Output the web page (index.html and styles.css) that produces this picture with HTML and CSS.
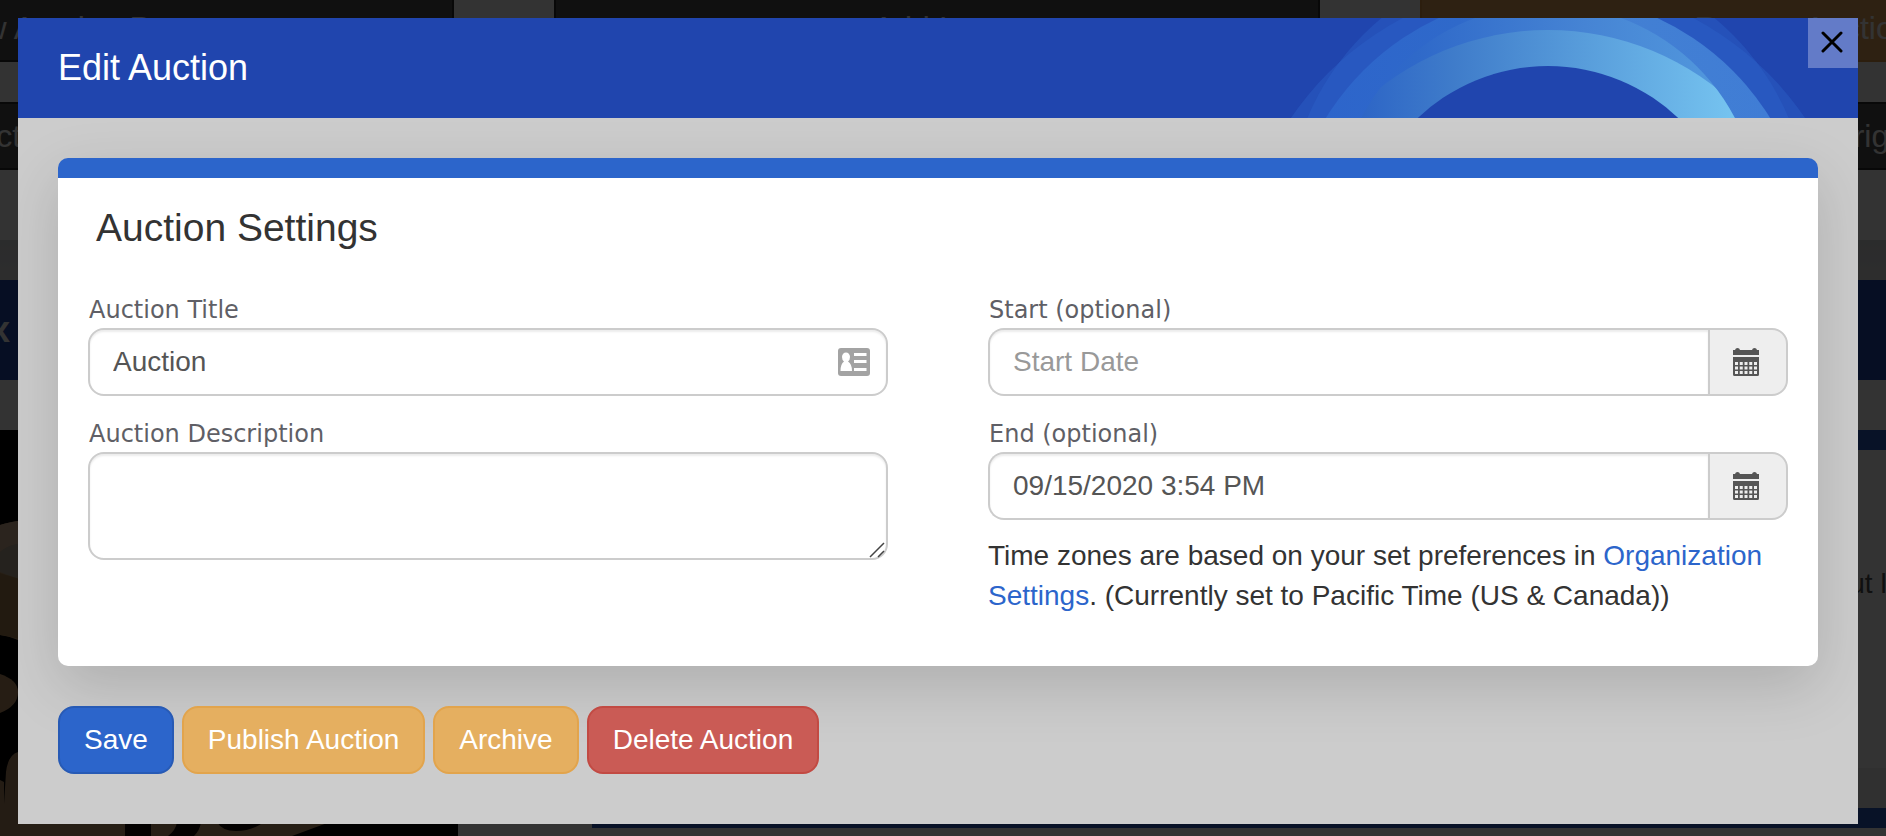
FILE: index.html
```
<!DOCTYPE html>
<html lang="en">
<head>
    <meta charset="UTF-8">
    <meta name="viewport" content="width=device-width, initial-scale=1.0">
    <title>Edit Auction</title>
    <link rel="stylesheet" href="styles.css">
</head>
<body>
    <!-- Page behind the modal -->
    <div class="page" aria-hidden="true">
        <div class="toolbar">
            <button class="tool" tabindex="-1">View Auction Page</button>
            <button class="tool" tabindex="-1">Add Item</button>
            <button class="tool tool-warning" tabindex="-1">Restart Auction</button>
            <button class="tool" tabindex="-1">Auction Reports</button>
            <button class="tool" tabindex="-1">Bidders</button>
            <button class="tool" tabindex="-1">Show Copyright</button>
        </div>
        <div class="page-shade"></div>
        <div class="banner"><h2>Box</h2></div>
        <div class="listing">
            <svg class="photo" viewBox="0 0 458 406" preserveAspectRatio="xMinYMin slice">
                <rect width="458" height="406" fill="#000"/>
                <path d="M0 95 Q9 92 30 89 V240 L18 210 Q9 206 0 205Z" fill="#c39b6e"/>
                <path d="M0 95 Q9 92 30 89 V112 Q9 114 0 122Z" fill="#d7b496"/>
                <path d="M0 122 Q8 114 30 112 V152 Q9 146 0 142Z" fill="#b9aa96"/>
                <path d="M0 143 Q9 146 30 152 V212 Q9 206 0 205Z" fill="#aa8250"/>
                <path d="M0 244 Q18 250 18 262 Q18 276 0 283Z" fill="#be9164"/>
                <path d="M0 350 L4 352 V406 H0Z M2 406 L6 342 Q8 325 18 322 H80 V406Z" fill="#b48c64"/>
                <path d="M20 392 H330 L292 406 H20Z" fill="#c39b6e"/>
                <path d="M125 392 H151 V406 H125Z M177 392 H201 Q200 400 194 406 H168 Q176 400 177 392Z M217 392 Q222 401 236 401 Q252 401 264 392Z" fill="#140a05"/>
            </svg>
            <div class="items">
                <div class="item-card"><p>About lots</p></div>
                <div class="item-card"></div>
            </div>
        </div>
    </div>

    <div class="overlay">
        <div class="modal" role="dialog" aria-modal="true" aria-labelledby="modal-title">
            <div class="modal-header">
                <h1 id="modal-title">Edit Auction</h1>
                <svg class="arcs" viewBox="0 0 598 100" aria-hidden="true">
                    <defs>
                        <linearGradient id="band" x1="66" y1="0" x2="510" y2="0" gradientUnits="userSpaceOnUse">
                            <stop offset="0" stop-color="#2d65cb"/>
                            <stop offset="0.3" stop-color="#2f69ca"/>
                            <stop offset="0.6" stop-color="#4380d3"/>
                            <stop offset="1" stop-color="#407dd5"/>
                        </linearGradient>
                        <linearGradient id="inner" x1="100" y1="0" x2="475" y2="0" gradientUnits="userSpaceOnUse">
                            <stop offset="0" stop-color="#2d65cb"/>
                            <stop offset="0.15" stop-color="#2f69c9"/>
                            <stop offset="0.6" stop-color="#4684d4"/>
                            <stop offset="1" stop-color="#539ade"/>
                        </linearGradient>
                        <linearGradient id="glow" x1="100" y1="0" x2="475" y2="0" gradientUnits="userSpaceOnUse">
                            <stop offset="0" stop-color="#2d65c6"/>
                            <stop offset="0.25" stop-color="#3f7cca"/>
                            <stop offset="0.6" stop-color="#589ddb"/>
                            <stop offset="1" stop-color="#76c4f0"/>
                        </linearGradient>
                        <clipPath id="ring"><circle cx="288" cy="198" r="211"/></clipPath>
                    </defs>
                    <circle cx="288" cy="275" r="311" fill="#2c65cb" fill-opacity="0.4"/>
                    <circle cx="288" cy="201" r="261" fill="#2c65cb" fill-opacity="0.4"/>
                    <circle cx="288" cy="237" r="261" fill="url(#band)"/>
                    <circle cx="288" cy="198" r="211" fill="url(#inner)"/>
                    <circle cx="288" cy="285" r="273" fill="url(#glow)" clip-path="url(#ring)"/>
                    <circle cx="288" cy="237" r="189" fill="#2045ae"/>
                </svg>
                <button class="close" type="button" aria-label="Close">
                    <svg width="22" height="22" viewBox="0 0 22 22"><path d="M2 2 L20 20 M20 2 L2 20" stroke="#000" stroke-width="3" stroke-linecap="round"/></svg>
                </button>
            </div>

            <form class="modal-body">
                <div class="card">
                    <h2>Auction Settings</h2>
                    <div class="columns">
                        <div class="column">
                            <div class="field">
                                <label for="title">Auction Title</label>
                                <div class="control">
                                    <input type="text" id="title" value="Auction">
                                    <svg class="contact-icon" viewBox="0 0 32 28" aria-hidden="true">
                                        <rect width="32" height="28" rx="3" fill="#a3a3a3"/>
                                        <path d="M8 4.500 a4 4.500 0 0 1 4 4.500 q0 3-2 4.500 q4 2.500 4 9.500 H2.500 q0-7 3.500-9.500 q-2-1.500-2-4.500 a4 4.500 0 0 1 4-4.500z M16 5 h12.500 v3 h-12.500z M16 12 h12.500 v3 h-12.500z M16 20 h12.500 v3 h-12.500z" fill="#fff"/>
                                    </svg>
                                </div>
                            </div>
                            <div class="field">
                                <label for="description">Auction Description</label>
                                <div class="control">
                                    <textarea id="description"></textarea>
                                    <svg class="grip" viewBox="0 0 16 16" aria-hidden="true"><path d="M1 15 L15 1 M9 15 L15 9" stroke="#444" stroke-width="1.500"/></svg>
                                </div>
                            </div>
                        </div>
                        <div class="column">
                            <div class="field">
                                <label for="start">Start (optional)</label>
                                <div class="input-group">
                                    <input type="text" id="start" placeholder="Start Date">
                                    <button class="addon" type="button" aria-label="Pick start date">
                                        <svg width="26" height="28" viewBox="0 0 26 28">
                                            <path d="M0 2 H2 Q2.500 0 4.500 0 Q6.500 0 7 2 H19 Q19.500 0 21.500 0 Q23.500 0 24 2 H26 V7 H0Z M0 9 H26 V26.500 Q26 28 24.500 28 H1.500 Q0 28 0 26.500Z" fill="#555"/>
                                            <path d="M2 15.500 H24 M2 20 H24 M2 24.500 H24" stroke="#eee" stroke-width="3" stroke-dasharray="3 1.750"/>
                                        </svg>
                                    </button>
                                </div>
                            </div>
                            <div class="field">
                                <label for="end">End (optional)</label>
                                <div class="input-group">
                                    <input type="text" id="end" value="09/15/2020 3:54 PM">
                                    <button class="addon" type="button" aria-label="Pick end date">
                                        <svg width="26" height="28" viewBox="0 0 26 28">
                                            <path d="M0 2 H2 Q2.500 0 4.500 0 Q6.500 0 7 2 H19 Q19.500 0 21.500 0 Q23.500 0 24 2 H26 V7 H0Z M0 9 H26 V26.500 Q26 28 24.500 28 H1.500 Q0 28 0 26.500Z" fill="#555"/>
                                            <path d="M2 15.500 H24 M2 20 H24 M2 24.500 H24" stroke="#eee" stroke-width="3" stroke-dasharray="3 1.750"/>
                                        </svg>
                                    </button>
                                </div>
                                <p class="help">Time zones are based on your set preferences in <a href="#">Organization Settings</a>. (Currently set to Pacific Time (US &amp; Canada))</p>
                            </div>
                        </div>
                    </div>
                </div>

                <div class="actions">
                    <button class="btn btn-primary" type="submit">Save</button>
                    <button class="btn btn-warning" type="button">Publish Auction</button>
                    <button class="btn btn-warning" type="button">Archive</button>
                    <button class="btn btn-danger" type="button">Delete Auction</button>
                </div>
            </form>
        </div>
    </div>
</body>
</html>
```
FILE: styles.css
```
* {
    box-sizing: border-box;
}

body {
    margin: 0;
    font-family: "Liberation Sans", Arial, sans-serif;
    font-size: 28px;
    line-height: 40px;
    color: #333;
    height: 100vh;
    overflow: hidden;
}

h1, h2, p {
    margin: 0;
    font-weight: normal;
}

button, input, textarea {
    font-family: inherit;
    font-size: inherit;
    line-height: inherit;
}

/* Page behind the modal */
.page {
    height: 100vh;
    overflow: hidden;
    background-color: #fff;
    display: flex;
    flex-direction: column;
}

.toolbar {
    display: grid;
    grid-template-columns: repeat(3, 766px);
    justify-content: center;
    gap: 40px 100px;
    margin-top: -6px;
    padding-right: 12px;
}

.tool {
    height: 68px;
    border: 2px solid #282828;
    background-color: #505050;
    color: #fff;
    font-size: 32px;
}

.tool-warning {
    background-color: #e6a35a;
    border-color: #dc9646;
}

.page-shade {
    height: 40px;
    flex-shrink: 0;
    margin-top: 70px;
    background: linear-gradient(#d7d9dc, #e1e1e1);
}

.banner {
    height: 100px;
    flex-shrink: 0;
    display: flex;
    align-items: center;
    background-color: #2045ae;
    color: #fff;
}

.banner h2 {
    margin-left: -58px;
    font-size: 36px;
    font-weight: bold;
}

.listing {
    flex: 1;
    min-height: 0;
    display: flex;
    gap: 134px;
    padding-top: 50px;
}

.photo {
    width: 458px;
    flex-shrink: 0;
}

.items {
    flex: 1;
    display: flex;
    flex-direction: column;
    gap: 40px;
    background-color: #f0f0f0;
}

.item-card {
    height: 338px;
    flex-shrink: 0;
    padding-top: 114px;
    border-top: 20px solid #2a5bc0;
    background-color: #fff;
    color: #505050;
    overflow: hidden;
}

.item-card p {
    width: max-content;
    margin: 0 -38px 0 auto;
}

/* Modal */
.overlay {
    position: fixed;
    inset: 0;
    padding: 18px 28px 12px 18px;
    background-color: rgba(0, 0, 0, 0.8);
}

.modal {
    background-color: #ccc;
}

.modal-header {
    position: relative;
    z-index: 1;
    display: flex;
    align-items: center;
    height: 100px;
    padding-left: 40px;
    background-color: #2045ae;
    color: #fff;
    overflow: hidden;
}

.modal-header h1 {
    font-size: 36px;
}

.arcs {
    width: 598px;
    height: 100px;
    margin-left: auto;
}

.close {
    position: absolute;
    top: 0;
    right: 0;
    display: flex;
    align-items: center;
    justify-content: center;
    width: 50px;
    height: 50px;
    padding: 0 2px 2px 0;
    border: none;
    background-color: #637bc8;
    cursor: pointer;
}

.modal-body {
    padding: 40px 40px 50px;
}

.card {
    padding: 30px 30px 50px;
    border-top: 20px solid #2c65cb;
    border-radius: 10px;
    background-color: #fff;
    box-shadow: 0 20px 60px rgba(0, 0, 0, 0.15);
}

.card h2 {
    margin: 0 0 42px 8px;
    font-size: 39px;
}

.columns {
    display: grid;
    grid-template-columns: 1fr 1fr;
    gap: 100px;
}

.column {
    display: flex;
    flex-direction: column;
    gap: 18px;
}

label {
    display: block;
    padding: 2px 0 0 1px;
    font-family: "DejaVu Sans", Verdana, sans-serif;
    font-size: 24px;
    line-height: 36px;
    color: #5f5f66;
}

.control {
    position: relative;
}

input, textarea {
    display: block;
    width: 100%;
    height: 68px;
    padding: 0 23px;
    border: 2px solid #ccc;
    border-radius: 16px;
    background-color: #fff;
    color: #555;
    box-shadow: inset 0 2px 2px rgba(0, 0, 0, 0.08);
    outline: none;
}

textarea {
    height: 108px;
    padding: 12px 23px;
}

textarea::-webkit-resizer {
    display: none;
}

input::placeholder {
    color: #999;
}

.contact-icon {
    position: absolute;
    top: 20px;
    right: 18px;
    width: 32px;
    height: 28px;
}

.grip {
    position: absolute;
    right: 3px;
    bottom: 2px;
    width: 16px;
    height: 16px;
    pointer-events: none;
}

.input-group {
    display: flex;
}

.input-group input {
    flex: 1;
    min-width: 0;
    border-right: none;
    border-radius: 16px 0 0 16px;
}

.addon {
    display: flex;
    align-items: center;
    justify-content: center;
    width: 80px;
    padding: 0 4px 0 0;
    border: 2px solid #ccc;
    border-radius: 0 16px 16px 0;
    background-color: #eee;
    cursor: pointer;
}

.help {
    margin-top: 16px;
}

.help a {
    color: #2c65cb;
    text-decoration: none;
}

.help a:hover {
    text-decoration: underline;
}

.actions {
    display: flex;
    gap: 8px;
    margin-top: 40px;
}

.btn {
    height: 68px;
    padding: 0 24px;
    border: 2px solid;
    border-radius: 16px;
    color: #fff;
    cursor: pointer;
}

.btn-primary {
    background-color: #2c65cb;
    border-color: #275ab5;
}

.btn-warning {
    background-color: #e5af60;
    border-color: #e2a44c;
}

.btn-danger {
    background-color: #ca5b55;
    border-color: #c24a43;
}
```
